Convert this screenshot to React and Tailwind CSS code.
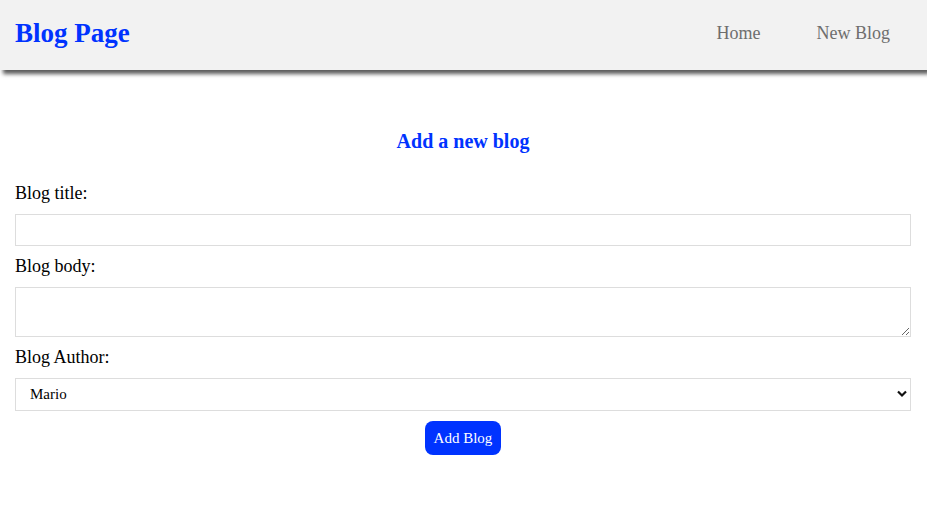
import { useState } from 'react';

export default function App() {
  const [title, setTitle] = useState('');
  const [body, setBody] = useState('');
  const [author, setAuthor] = useState('mario');

  return (
    <div className="min-h-[529px] bg-white font-['Liberation_Serif',serif] text-black">
      {/* Navbar */}
      <nav className="h-[70px] bg-[#f2f2f2] flex items-center justify-between pl-[15px] pr-[37px] pb-[4px] shadow-[3px_4px_4px_rgba(0,0,0,0.65)]">
        <h1 className="text-[27px] font-bold text-[#0033ff] leading-none">Blog Page</h1>
        <div className="flex items-center gap-[56px] text-[18px] text-[#6e6e6e]">
          <a href="#">Home</a>
          <a href="#">New Blog</a>
        </div>
      </nav>

      {/* Create form */}
      <div className="pl-[15px] pr-[16px] pt-[59px]">
        <h2 className="text-center text-[20px] font-bold text-[#0033ff] leading-[24px]">Add a new blog</h2>
        <form className="mt-[30px]" onSubmit={(e) => e.preventDefault()}>
          <label className="block text-[18px] leading-[21px]">Blog title:</label>
          <input
            type="text"
            value={title}
            onChange={(e) => setTitle(e.target.value)}
            className="block w-full h-[32px] mt-[10px] border border-[#dddddd] px-[10px] text-[14px] outline-none"
          />
          <label className="block text-[18px] leading-[21px] mt-[10px]">Blog body:</label>
          <textarea
            value={body}
            onChange={(e) => setBody(e.target.value)}
            className="block w-full h-[50px] mt-[10px] border border-[#dddddd] px-[10px] py-[6px] text-[14px] outline-none"
          />
          <label className="block text-[18px] leading-[21px] mt-[10px]">Blog Author:</label>
          <div className="relative mt-[10px]">
            <select
              value={author}
              onChange={(e) => setAuthor(e.target.value)}
              className="block w-full h-[33px] appearance-none border border-[#dddddd] bg-white pl-[14px] font-['Liberation_Serif',serif] text-[15px] outline-none"
            >
              <option value="mario">Mario</option>
              <option value="yoshi">Yoshi</option>
            </select>
            <svg
              className="absolute right-[4px] top-[12px] pointer-events-none"
              width="10"
              height="8"
              viewBox="0 0 10 8"
            >
              <path d="M1 1.5 L5 5.5 L9 1.5" fill="none" stroke="#111" strokeWidth="2.2" />
            </svg>
          </div>
          <div className="flex justify-center mt-[10px]">
            <button
              type="submit"
              className="w-[76px] h-[34px] rounded-[8px] bg-[#0033ff] text-white font-['Liberation_Serif',serif] text-[15px]"
            >
              Add Blog
            </button>
          </div>
        </form>
      </div>
    </div>
  );
}
